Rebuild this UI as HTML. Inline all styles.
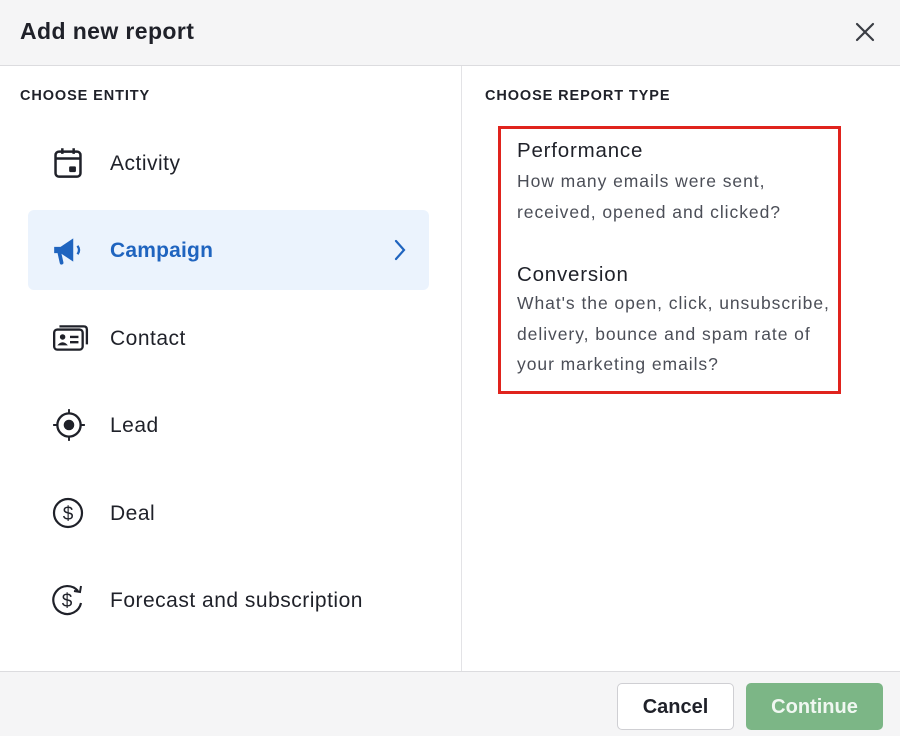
<!DOCTYPE html>
<html><head><style>
*{box-sizing:border-box;margin:0;padding:0}
body{width:900px;height:736px;overflow:hidden;background:#fff;font-family:"Liberation Sans",sans-serif;color:#1f2129;position:relative}
.hdr{position:absolute;left:0;top:0;width:900px;height:66px;background:#f5f5f6;border-bottom:1px solid #dcdcdf}
.hdr h1{position:absolute;left:20px;top:18px;font-size:23px;font-weight:600;color:#1f2129;letter-spacing:.4px}
.x{position:absolute;left:854px;top:21px}
.vdiv{position:absolute;left:461px;top:66px;width:1px;height:605px;background:#e3e3e6}
.lbl{position:absolute;font-size:14.5px;font-weight:700;letter-spacing:.9px;color:#1f2129}
.item{position:absolute;left:28px;width:401px;height:80px;border-radius:6px}
.item span{position:absolute;left:82px;font-size:21px;top:50%;transform:translateY(-45%);letter-spacing:.5px}
.item svg{position:absolute;left:23px;top:50%;transform:translateY(-50%)}
.sel{background:#ebf3fd;color:#1f64bf}
.sel span{font-weight:700;letter-spacing:.2px}
.box{position:absolute;left:498px;top:126px;width:343px;height:268px;border:3px solid #e0231d}
.t{position:absolute;left:517px;font-size:20.5px;color:#1f2129;letter-spacing:.8px}
.d{position:absolute;left:517px;font-size:17.5px;color:#4b4e57;line-height:30.5px;letter-spacing:.95px}
.ftr{position:absolute;left:0;top:671px;width:900px;height:65px;background:#f5f5f6;border-top:1px solid #dcdcdf}
.btn{position:absolute;top:683px;height:47px;border-radius:5px;font-size:20px;font-weight:700;text-align:center;line-height:46px}
.cancel{left:617px;width:117px;background:#fff;border:1px solid #cfcfd3;color:#1f2129}
.cont{left:746px;width:137px;background:#7cb686;border:1px solid #7cb686;color:#f0f7f1}
</style></head><body>
<div class="hdr"><h1>Add new report</h1>
<svg class="x" width="22" height="22" viewBox="0 0 22 22"><path d="M3 3L19 19M19 3L3 19" stroke="#3a3d44" stroke-width="2.2" stroke-linecap="round"/></svg></div>
<div class="vdiv"></div>
<div class="lbl" style="left:20px;top:88px">CHOOSE ENTITY</div>
<div class="lbl" style="left:485px;top:88px">CHOOSE REPORT TYPE</div>

<div class="item" style="top:123px"><svg width="34" height="34" viewBox="0 0 30 30"><rect x="4" y="5" width="22" height="22" rx="3" fill="none" stroke="#1f2129" stroke-width="2.2"/><path d="M4 11H26M10 2V7M20 2V7" stroke="#1f2129" stroke-width="2.2"/><rect x="16" y="18" width="6" height="5" rx="1" fill="#1f2129"/></svg><span>Activity</span></div>
<div class="item sel" style="top:210px"><svg width="36" height="32" viewBox="0 0 34 30"><path d="M3 12H9L21 4V26L9 18H3Z" fill="#1f64bf"/><path d="M8 18L10 27" stroke="#1f64bf" stroke-width="3.5" stroke-linecap="round"/><path d="M25 11Q28 15 25 19" stroke="#1f64bf" stroke-width="2.2" fill="none"/></svg><span>Campaign</span>
<svg style="left:365px" width="14" height="22" viewBox="0 0 14 22"><path d="M3 2L11 11L3 20" stroke="#1f64bf" stroke-width="2.2" fill="none" stroke-linecap="round"/></svg></div>
<div class="item" style="top:298px"><svg width="38" height="32" viewBox="0 0 36 30"><rect x="3" y="7" width="27" height="19" rx="3" fill="none" stroke="#1f2129" stroke-width="2.2"/><path d="M8 4H31Q34 4 34 7V21" stroke="#1f2129" stroke-width="2.2" fill="none"/><circle cx="11" cy="14" r="2.6" fill="#1f2129"/><path d="M6 22Q11 16 16 22Z" fill="#1f2129"/><path d="M18 14H26M18 19H26" stroke="#1f2129" stroke-width="2.2"/></svg><span>Contact</span></div>
<div class="item" style="top:385px"><svg width="36" height="36" viewBox="0 0 34 34"><circle cx="17" cy="17" r="11" fill="none" stroke="#1f2129" stroke-width="2.2"/><circle cx="17" cy="17" r="5" fill="#1f2129"/><path d="M17 2V7M17 27V32M2 17H7M27 17H32" stroke="#1f2129" stroke-width="1.8"/></svg><span>Lead</span></div>
<div class="item" style="top:473px"><svg width="34" height="34" viewBox="0 0 34 34"><circle cx="17" cy="17" r="14" fill="none" stroke="#1f2129" stroke-width="2.2"/><text x="17" y="24" font-size="19" text-anchor="middle" fill="#1f2129" font-family="Liberation Sans">$</text></svg><span>Deal</span></div>
<div class="item" style="top:560px"><svg width="34" height="34" viewBox="0 0 34 34"><path d="M27 8A14 14 0 1 0 30 20" fill="none" stroke="#1f2129" stroke-width="2.2"/><path d="M23 8L29 9L30 3" fill="none" stroke="#1f2129" stroke-width="2"/><text x="16" y="24" font-size="19" text-anchor="middle" fill="#1f2129" font-family="Liberation Sans">$</text></svg><span>Forecast and subscription</span></div>

<div class="box"></div>
<div class="t" style="top:139px">Performance</div>
<div class="d" style="top:166px">How many emails were sent,<br>received, opened and clicked?</div>
<div class="t" style="top:263px">Conversion</div>
<div class="d" style="top:288px">What's the open, click, unsubscribe,<br>delivery, bounce and spam rate of<br>your marketing emails?</div>

<div class="ftr"></div>
<div class="btn cancel">Cancel</div>
<div class="btn cont">Continue</div>
</body></html>
